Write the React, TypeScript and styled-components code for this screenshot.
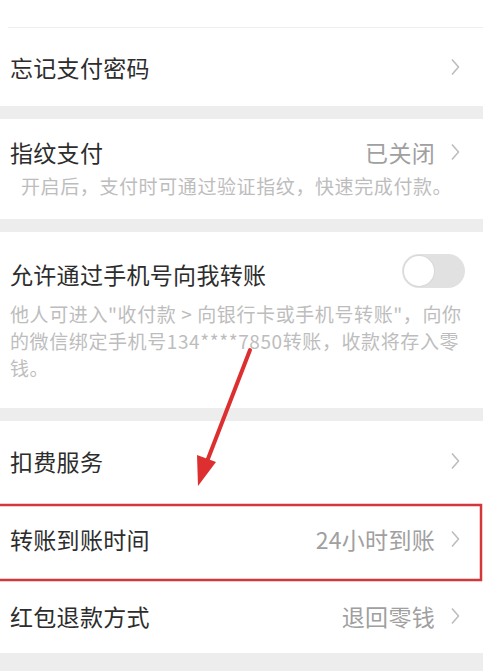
import styled, { createGlobalStyle } from "styled-components"

const GlobalStyle = createGlobalStyle`
  html, body {
    margin: 0;
    padding: 0;
    background: #ffffff;
    overflow: hidden;
  }
  body {
    font-family: "Noto Sans CJK SC", "Noto Sans", sans-serif;
  }
`

const Page = styled.div`
  position: relative;
  width: 483px;
  height: 671px;
  overflow: hidden;
  background: #ededed;
`

const Scroller = styled.div`
  margin-top: -50px;
  display: flex;
  flex-direction: column;
`

const Group = styled.section`
  background: #ffffff;
  margin-bottom: 13px;
  display: flex;
  flex-direction: column;
`

const Row = styled.div<{ $divider?: boolean; $h?: number; $lift?: number }>`
  height: ${(p) => p.$h ?? 78}px;
  display: flex;
  align-items: center;
  padding: 0 23px ${(p) => p.$lift ?? 0}px 10px;
  box-sizing: border-box;
  position: relative;
  &::after {
    content: "";
    display: ${(p) => (p.$divider ? "block" : "none")};
    position: absolute;
    left: 8px;
    right: 0;
    bottom: 0;
    height: 1px;
    background: #efefef;
  }
`

const Block = styled.div<{ $top: number; $bottom: number }>`
  display: flex;
  flex-direction: column;
  padding: ${(p) => p.$top}px 20px ${(p) => p.$bottom}px 10px;
`

const TitleLine = styled.div<{ $h: number }>`
  height: ${(p) => p.$h}px;
  display: flex;
  align-items: center;
  padding-right: 3px;
`

const Label = styled.span`
  flex: 1;
  font-size: 23px;
  color: #2d2d2d;
  letter-spacing: 0.3px;
`

const Value = styled.span`
  font-size: 23px;
  color: #a0a0a0;
  margin-right: 16px;
  letter-spacing: 0.3px;
`

const Hint = styled.p<{ $indent?: number }>`
  margin: 0;
  padding-left: ${(p) => p.$indent ?? 0}px;
  font-size: 19px;
  line-height: 27px;
  color: #bdbdbd;
  letter-spacing: 0.6px;
`

const Switch = styled.div`
  width: 63px;
  height: 34px;
  border-radius: 17px;
  background: #e1e1e1;
  display: flex;
  align-items: center;
  padding: 0 2px;
  box-sizing: border-box;
  margin: 0 -5px 6px 0;
`

const Knob = styled.div`
  width: 30px;
  height: 30px;
  border-radius: 50%;
  background: #ffffff;
  box-shadow: 0 0 0 1px #d8d8d8;
`

const Overlay = styled.svg`
  position: absolute;
  inset: 0;
  pointer-events: none;
`

function Chevron() {
  return (
    <svg width="9" height="18" viewBox="0 0 9 18" fill="none">
      <path d="M1 1.5 L7.5 9 L1 16.5" stroke="#bdbdbd" strokeWidth="1.6" strokeLinejoin="round" />
    </svg>
  )
}

export default function App() {
  return (
    <Page>
      <GlobalStyle />
      <Scroller>
        <Group>
          <Row $divider $lift={4}>
            <Label>修改支付密码</Label>
          </Row>
          <Row>
            <Label>忘记支付密码</Label>
            <Chevron />
          </Row>
        </Group>

        <Group>
          <Block $top={13} $bottom={20}>
            <TitleLine $h={40}>
              <Label>指纹支付</Label>
              <Value>已关闭</Value>
              <Chevron />
            </TitleLine>
            <Hint $indent={11}>开启后，支付时可通过验证指纹，快速完成付款。</Hint>
          </Block>
        </Group>

        <Group>
          <Block $top={15} $bottom={27}>
            <TitleLine $h={53}>
              <Label>允许通过手机号向我转账</Label>
              <Switch>
                <Knob />
              </Switch>
            </TitleLine>
            <Hint>
              他人可进入"收付款 &gt; 向银行卡或手机号转账"，向你的微信绑定手机号134****7850转账，收款将存入零钱。
            </Hint>
          </Block>
        </Group>

        <Group>
          <Row $h={79}>
            <Label>扣费服务</Label>
            <Chevron />
          </Row>
          <Row $h={78}>
            <Label>转账到账时间</Label>
            <Value>24小时到账</Value>
            <Chevron />
          </Row>
          <Row $h={75}>
            <Label>红包退款方式</Label>
            <Value>退回零钱</Value>
            <Chevron />
          </Row>
        </Group>
      </Scroller>

      <Overlay width="483" height="671" viewBox="0 0 483 671">
        <rect x="-4" y="505" width="485" height="75" fill="none" stroke="#d2373a" strokeWidth="2.5" />
        <line x1="250" y1="350" x2="206" y2="464" stroke="#dd2f2f" strokeWidth="4" strokeLinecap="round" />
        <polygon points="198,486 197,455 216,462" fill="#dd2f2f" />
      </Overlay>
    </Page>
  )
}
